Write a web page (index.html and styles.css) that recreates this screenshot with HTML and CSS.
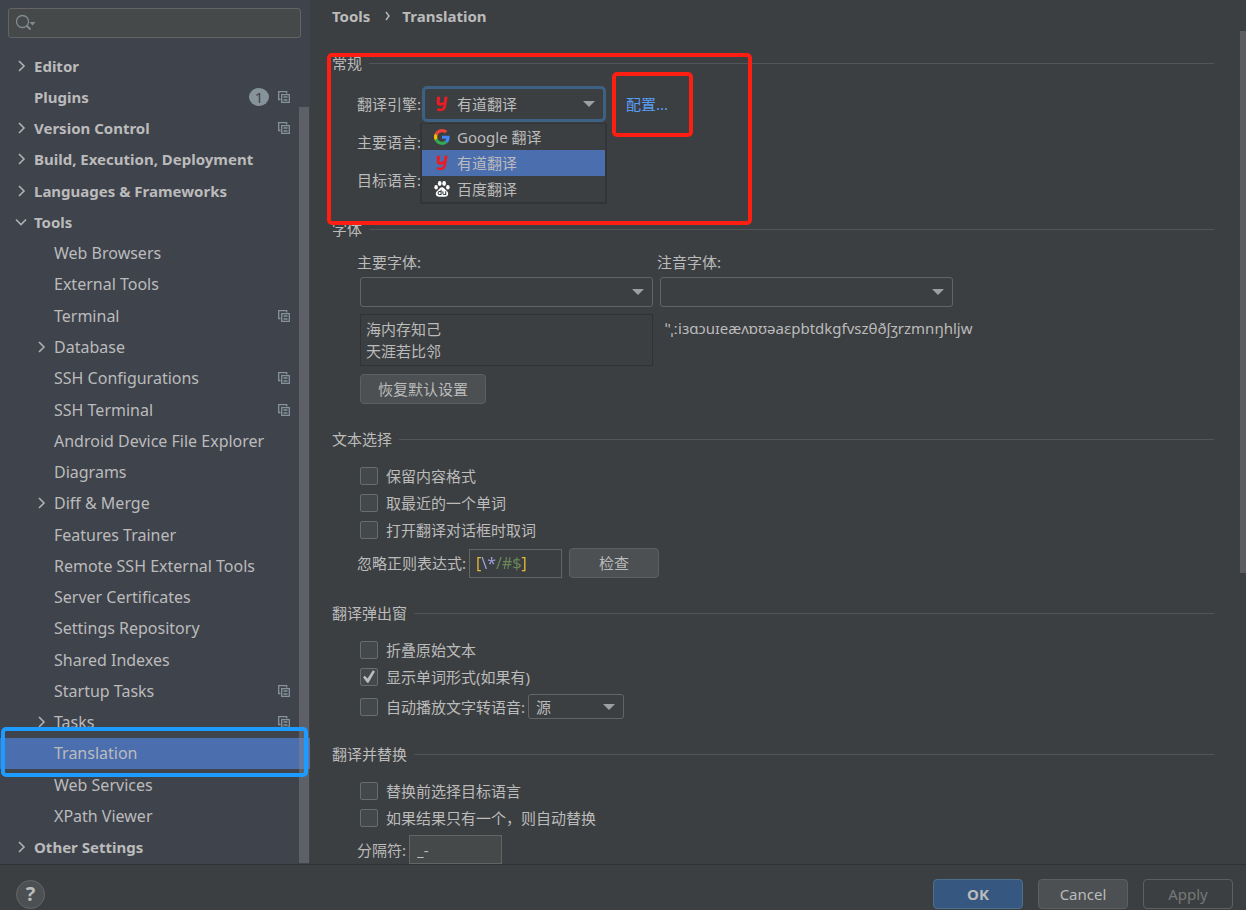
FILE: index.html
```html
<!DOCTYPE html>
<html lang="zh-CN">
<head>
<meta charset="utf-8">
<title>Settings</title>
<link rel="stylesheet" href="styles.css">
</head>
<body>
<svg class="defs" aria-hidden="true">
  <symbol id="right" viewBox="0 0 12 12"><path d="M4 1l5 5-5 5" fill="none" stroke="currentColor" stroke-width="1.6"/></symbol>
  <symbol id="down" viewBox="0 0 12 12"><path d="M1 3.500l5 5 5-5" fill="none" stroke="currentColor" stroke-width="1.6"/></symbol>
  <symbol id="copy" viewBox="0 0 12 12"><path d="M2.500 8.500H.7V.7h8v1.800M3.700 3.700h7.600v7.600H3.700zM5.500 6h4M5.500 9h4" fill="none" stroke="currentColor" stroke-width="1.3"/></symbol>
  <symbol id="youdao" viewBox="0 0 16 16"><path d="M3 .8H6.200L5.700 5.600Q5.600 7 6.900 7Q8.800 7 9.900 5.300L10.500 .8H13.600L12 10.600Q11.200 15.200 6.600 15.200Q4.400 15.200 2.700 14.300L3.700 11.900Q5 12.700 6.500 12.700Q8.700 12.700 9.200 10.400L9.400 8.700Q7.900 9.700 6.100 9.700Q2.400 9.700 2.700 5.700L2.900 3Z" fill="#ed1c24"/></symbol>
  <symbol id="google" viewBox="0 0 48 48"><path fill="#ea4335" d="M24 9.500c3.540 0 6.710 1.220 9.210 3.600l6.850-6.850C35.900 2.380 30.470 0 24 0 14.620 0 6.510 5.380 2.560 13.220l7.980 6.190C12.430 13.720 17.740 9.500 24 9.500z"/><path fill="#4285f4" d="M46.980 24.550c0-1.570-.15-3.090-.38-4.550H24v9.020h12.940c-.58 2.960-2.260 5.480-4.780 7.180l7.730 6c4.510-4.180 7.090-10.360 7.090-17.650z"/><path fill="#fbbc05" d="M10.530 28.590c-.48-1.450-.76-2.990-.76-4.590s.27-3.140.76-4.590l-7.980-6.190C.92 16.460 0 20.120 0 24s.92 7.540 2.560 10.780l7.970-6.190z"/><path fill="#34a853" d="M24 48c6.480 0 11.930-2.130 15.890-5.810l-7.730-6c-2.150 1.450-4.920 2.300-8.160 2.300-6.260 0-11.570-4.220-13.470-9.910l-7.980 6.190C6.510 42.620 14.620 48 24 48z"/></symbol>
  <symbol id="baidu" viewBox="0 0 18 18"><g fill="#fff"><ellipse cx="2.400" cy="7" rx="2" ry="2.600"/><ellipse cx="6.400" cy="2.800" rx="2.100" ry="2.700"/><ellipse cx="11.400" cy="2.800" rx="2.100" ry="2.700"/><ellipse cx="15.600" cy="7" rx="2" ry="2.600"/><path d="M9 7c2 0 3 2 4.500 3.300 1.800 1.600 3 3 2.300 5.200-.8 2.400-3.500 2.300-6.800 2.300s-6 .1-6.800-2.300c-.7-2.200.5-3.600 2.300-5.200C6 9 7 7 9 7z"/></g><path d="M8 9.800v5.400H6.200q-1.600 0-1.600-1.700T6.200 11.800H8M10 11.500v2.300q0 1.400 1.400 1.400h1.800v-3.700" fill="none" stroke="#3c3f41" stroke-width="1.200"/></symbol>
</svg>

<main class="workspace">
  <aside class="sidebar">
    <div class="search">
      <svg viewBox="0 0 22 18" aria-hidden="true"><circle cx="7.500" cy="7.500" r="6" fill="none" stroke="currentColor" stroke-width="1.300"/><path d="M11.500 11.500l4 4" stroke="currentColor" stroke-width="2"/><path d="M14.500 8h6l-3 3.500z" fill="currentColor"/></svg>
      <input type="search" aria-label="Search settings">
    </div>
    <nav class="tree" aria-label="Settings">
      <a class="row top" href="#"><svg class="arrow"><use href="#right"/></svg><span class="name">Editor</span></a>
      <a class="row top" href="#"><span class="arrow"></span><span class="name">Plugins</span><span class="badge">1</span><svg class="copy"><use href="#copy"/></svg></a>
      <a class="row top" href="#"><svg class="arrow"><use href="#right"/></svg><span class="name">Version Control</span><svg class="copy"><use href="#copy"/></svg></a>
      <a class="row top" href="#"><svg class="arrow"><use href="#right"/></svg><span class="name">Build, Execution, Deployment</span></a>
      <a class="row top" href="#"><svg class="arrow"><use href="#right"/></svg><span class="name">Languages &amp; Frameworks</span></a>
      <a class="row top" href="#"><svg class="arrow"><use href="#down"/></svg><span class="name">Tools</span></a>
      <a class="row" href="#"><span class="arrow"></span><span class="name">Web Browsers</span></a>
      <a class="row" href="#"><span class="arrow"></span><span class="name">External Tools</span></a>
      <a class="row" href="#"><span class="arrow"></span><span class="name">Terminal</span><svg class="copy"><use href="#copy"/></svg></a>
      <a class="row" href="#"><svg class="arrow"><use href="#right"/></svg><span class="name">Database</span></a>
      <a class="row" href="#"><span class="arrow"></span><span class="name">SSH Configurations</span><svg class="copy"><use href="#copy"/></svg></a>
      <a class="row" href="#"><span class="arrow"></span><span class="name">SSH Terminal</span><svg class="copy"><use href="#copy"/></svg></a>
      <a class="row" href="#"><span class="arrow"></span><span class="name">Android Device File Explorer</span></a>
      <a class="row" href="#"><span class="arrow"></span><span class="name">Diagrams</span></a>
      <a class="row" href="#"><svg class="arrow"><use href="#right"/></svg><span class="name">Diff &amp; Merge</span></a>
      <a class="row" href="#"><span class="arrow"></span><span class="name">Features Trainer</span></a>
      <a class="row" href="#"><span class="arrow"></span><span class="name">Remote SSH External Tools</span></a>
      <a class="row" href="#"><span class="arrow"></span><span class="name">Server Certificates</span></a>
      <a class="row" href="#"><span class="arrow"></span><span class="name">Settings Repository</span></a>
      <a class="row" href="#"><span class="arrow"></span><span class="name">Shared Indexes</span></a>
      <a class="row" href="#"><span class="arrow"></span><span class="name">Startup Tasks</span><svg class="copy"><use href="#copy"/></svg></a>
      <a class="row" href="#"><svg class="arrow"><use href="#right"/></svg><span class="name">Tasks</span><svg class="copy"><use href="#copy"/></svg></a>
      <a class="row selected" href="#" aria-current="page"><span class="arrow"></span><span class="name">Translation</span></a>
      <a class="row" href="#"><span class="arrow"></span><span class="name">Web Services</span></a>
      <a class="row" href="#"><span class="arrow"></span><span class="name">XPath Viewer</span></a>
      <a class="row top" href="#"><svg class="arrow"><use href="#right"/></svg><span class="name">Other Settings</span></a>
    </nav>
    <div class="scrollbar tree-scroll"></div>
  </aside>

  <div class="content">
    <nav class="crumbs" aria-label="Breadcrumb"><span>Tools</span><svg viewBox="0 0 6 10" aria-hidden="true"><path d="M1 1l3 4-3 4" fill="none" stroke="currentColor" stroke-width="1.400"/></svg><span>Translation</span></nav>

    <section class="section general">
      <h2>常规</h2>
      <div class="body">
        <div class="line engine">
          <label for="engine">翻译引擎:</label>
          <div class="combo focused">
            <svg class="logo"><use href="#youdao"/></svg>
            <select id="engine"><option>有道翻译</option></select>
          </div>
          <div class="configure"><a href="#">配置...</a></div>
          <ul class="popup" role="listbox" aria-label="翻译引擎">
            <li role="option"><svg class="logo"><use href="#google"/></svg>Google 翻译</li>
            <li role="option" class="active" aria-selected="true"><svg class="logo"><use href="#youdao"/></svg>有道翻译</li>
            <li role="option"><svg class="logo"><use href="#baidu"/></svg>百度翻译</li>
          </ul>
        </div>
        <div class="line"><label for="primary">主要语言:</label><div class="combo language"><select id="primary"></select></div></div>
        <div class="line"><label for="target">目标语言:</label><div class="combo language"><select id="target"></select></div></div>
      </div>
    </section>

    <section class="section">
      <h2>字体</h2>
      <div class="body fonts">
        <div class="font-column">
          <label for="main-font">主要字体:</label>
          <div class="combo"><select id="main-font"></select></div>
          <div class="preview framed">海内存知己<br>天涯若比邻</div>
          <button class="button reset" type="button">恢复默认设置</button>
        </div>
        <div class="font-column">
          <label for="phonetic-font">注音字体:</label>
          <div class="combo"><select id="phonetic-font"></select></div>
          <div class="preview">ˈ'ˌːiɜɑɔuɪeæʌɒʊəaɛpbtdkgfvszθðʃʒrzmnŋhljw</div>
        </div>
      </div>
    </section>

    <section class="section">
      <h2>文本选择</h2>
      <div class="body">
        <label class="check"><input type="checkbox">保留内容格式</label>
        <label class="check"><input type="checkbox">取最近的一个单词</label>
        <label class="check"><input type="checkbox">打开翻译对话框时取词</label>
        <div class="line field-line">
          <label for="regex">忽略正则表达式:</label>
          <div class="field"><input class="regex" id="regex" type="text" value="[\*/#$]"></div>
          <button class="button" type="button">检查</button>
        </div>
      </div>
    </section>

    <section class="section">
      <h2>翻译弹出窗</h2>
      <div class="body">
        <label class="check"><input type="checkbox">折叠原始文本</label>
        <label class="check"><input type="checkbox" checked>显示单词形式(如果有)</label>
        <div class="line speech-line">
          <label class="check"><input type="checkbox">自动播放文字转语音:</label>
          <div class="combo small"><select aria-label="自动播放文字转语音"><option>源</option></select></div>
        </div>
      </div>
    </section>

    <section class="section">
      <h2>翻译并替换</h2>
      <div class="body">
        <label class="check"><input type="checkbox">替换前选择目标语言</label>
        <label class="check"><input type="checkbox">如果结果只有一个，则自动替换</label>
        <div class="line separator-line">
          <label for="separator">分隔符:</label>
          <div class="field filled"><input id="separator" type="text" value="_-"></div>
        </div>
      </div>
    </section>
    <div class="scrollbar page-scroll"></div>
  </div>
</main>

<footer class="footer">
  <button class="help" type="button" aria-label="Help">?</button>
  <div class="actions">
    <button class="button primary" type="button">OK</button>
    <button class="button" type="button">Cancel</button>
    <button class="button" type="button" disabled>Apply</button>
  </div>
</footer>
</body>
</html>
```

FILE: styles.css
```css
*, *::before, *::after { box-sizing: border-box; }

body {
  margin: 0;
  height: 100vh;
  display: flex;
  flex-direction: column;
  overflow: hidden;
  background: #3c3f41;
  color: #bbbbbb;
  font: 15px/22px "Noto Sans", "Noto Sans CJK SC", sans-serif;
}

.defs { position: absolute; width: 0; height: 0; }

input, select, button { font: inherit; color: inherit; margin: 0; }
a { color: inherit; text-decoration: none; }

.workspace { flex: 1; min-height: 0; display: flex; }

/* Sidebar */
.sidebar {
  position: relative;
  flex: none;
  width: 310px;
  display: flex;
  flex-direction: column;
  background: #3f434c;
}

.search {
  display: flex;
  align-items: center;
  height: 30px;
  margin: 8px 9px 12px 8px;
  padding-left: 6px;
  border: 1px solid #646464;
  border-radius: 3px;
  background: #45494a;
}
.search svg { width: 22px; height: 18px; color: #7f8b91; }
.search input { flex: 1; min-width: 0; border: 0; background: none; outline: 0; }

.tree { flex: 1; min-height: 0; display: flex; flex-direction: column; padding-bottom: 1px; }
.row {
  position: relative;
  flex: 1;
  display: flex;
  align-items: center;
  padding: 0 20px 0 35px;
  font-size: 16px;
}
.row.top { padding-left: 15px; font-size: 15px; font-weight: 700; }
.arrow { flex: none; width: 12px; height: 12px; margin-right: 7px; color: #afb1b3; }
.name { flex: 1; white-space: nowrap; }
.copy { width: 12px; height: 12px; color: #87939a; }
.badge {
  width: 20px;
  height: 18px;
  margin-right: 9px;
  border-radius: 50%;
  background: #87939a;
  color: #3f434c;
  font-weight: 400;
  line-height: 18px;
  text-align: center;
}
.selected { background: #4b6eaf; }
.selected::after {
  content: "";
  position: absolute;
  z-index: 2;
  inset: -11px 2px -8px 1px;
  border: 4px solid #1e9bff;
  border-radius: 5px;
}

.scrollbar { position: absolute; background: rgba(140, 140, 145, 0.4); }
.tree-scroll { top: 107px; right: 1px; bottom: 1px; width: 10px; }
.page-scroll { top: 31px; right: 0; width: 6px; height: 542px; }

/* Content */
.content {
  position: relative;
  flex: 1;
  min-width: 0;
  padding: 5px 32px 0 22px;
  overflow: hidden;
}
.crumbs { display: flex; align-items: center; margin-bottom: 25px; font-weight: 700; }
.crumbs svg { width: 6px; height: 10px; margin: 0 11px 0 15px; }

.section { position: relative; margin-bottom: 24px; }
.section h2 {
  display: flex;
  align-items: center;
  gap: 7px;
  margin: 0;
  font: inherit;
}
.section h2::after { content: ""; flex: 1; height: 1px; background: #515658; }
.body { padding: 12px 0 0 25px; }

.line { display: flex; align-items: center; }

.general { margin-bottom: 20px; }
.general .body { display: flex; flex-direction: column; gap: 2px; }
.general .line { height: 36px; }
.general::after {
  content: "";
  position: absolute;
  z-index: 1;
  top: 1px;
  left: -5px;
  width: 425px;
  height: 172px;
  border: 4px solid #ff1e12;
  border-radius: 5px;
  pointer-events: none;
}
.engine { position: relative; z-index: 1; }

.combo {
  position: relative;
  height: 30px;
  border: 1px solid #646464;
  border-radius: 3px;
  background: #3c3f41;
}
.combo::after {
  content: "";
  position: absolute;
  top: 50%;
  right: 8px;
  margin-top: -3px;
  border: 6px solid transparent;
  border-top-color: #9da0a2;
  border-bottom: 0;
  pointer-events: none;
}
.combo select {
  width: 100%;
  height: 100%;
  padding: 0 7px;
  border: 0;
  outline: 0;
  appearance: none;
  background: none;
}
.combo.focused {
  width: 184px;
  height: 36px;
  margin-left: 1px;
  border: 3px solid #3d6185;
  border-radius: 5px;
}
.combo.focused select { padding-left: 32px; }
.combo.focused .logo { position: absolute; top: 7px; left: 9px; }
.combo.language { width: 178px; margin-left: 3px; }
.logo { width: 16px; height: 16px; }

.configure {
  position: relative;
  margin-left: 20px;
}
.configure::after {
  content: "";
  position: absolute;
  inset: -21px -25px -22px -14px;
  border: 4px solid #ff1e12;
  border-radius: 5px;
  pointer-events: none;
}
.configure a { color: #589df6; }

.popup {
  position: absolute;
  top: 37px;
  left: 63px;
  width: 187px;
  margin: 0;
  padding: 0;
  border: 2px solid #323435;
  border-top-width: 1px;
  background: #3c3f41;
  list-style: none;
}
.popup li {
  display: flex;
  align-items: center;
  gap: 7px;
  height: 26px;
  padding-left: 12px;
}
.popup .active { background: #4b6eaf; }

.fonts { display: grid; grid-template-columns: 300px 300px; padding-top: 11px; }
.font-column { display: flex; flex-direction: column; padding-right: 4px; }
.font-column .combo { margin: 4px 0 7px 3px; }
.preview { margin-left: 3px; padding: 3px 5px; white-space: nowrap; }
.framed { border: 1px solid #323232; }
.reset { align-self: flex-start; margin: 8px 0 0 3px; }

.check { display: flex; align-items: center; height: 27px; gap: 8px; padding-left: 3px; }
.check input {
  flex: none;
  display: grid;
  place-items: center;
  width: 18px;
  height: 18px;
  appearance: none;
  border: 1px solid #6b6b6b;
  border-radius: 2px;
  background: #43494a;
}
.check input:checked::before {
  content: "";
  width: 12px;
  height: 13px;
  background: #bbbbbb;
  clip-path: polygon(0 56%, 15% 44%, 38% 66%, 82% 2%, 100% 12%, 46% 98%, 34% 98%);
}

.field-line { margin-top: 5px; }
.field { width: 93px; height: 29px; margin: 0 7px 0 3px; border: 1px solid #646464; }
.field input {
  display: block;
  width: 100%;
  height: 100%;
  padding: 0 7px;
  border: 0;
  outline: 0;
  background: none;
}
.field .regex {
  padding: 0 6px;
  color: transparent;
  font-size: 16px;
  background: linear-gradient(90deg, #e8ba36 11px, #a0a0dd 11px 26px, #6a8759 26px 50px, #e8ba36 50px);
  background-clip: text;
  -webkit-background-clip: text;
}
.field.filled { background: #45494a; }

.speech-line { margin-top: 4px; height: 25px; }
.combo.small { width: 96px; height: 25px; margin-left: 3px; }
.separator-line { margin-top: 4px; }

.button {
  width: 90px;
  height: 30px;
  padding: 0;
  border: 1px solid #5e6060;
  border-radius: 4px;
  background: #4c5052;
}
.button.reset { width: 126px; }
.button.primary { border-color: #4c708c; background: #365880; font-weight: 700; }
.button:disabled { background: none; color: #777777; }

/* Footer */
.footer {
  flex: none;
  display: flex;
  align-items: center;
  justify-content: space-between;
  padding: 14px 13px 1px 16px;
  border-top: 1px solid #323232;
}
.help {
  width: 29px;
  height: 29px;
  padding: 0;
  border: 1px solid #646868;
  border-radius: 50%;
  background: #4c5052;
  font-size: 20px;
  font-weight: 700;
}
.actions { display: flex; gap: 15px; }
```
